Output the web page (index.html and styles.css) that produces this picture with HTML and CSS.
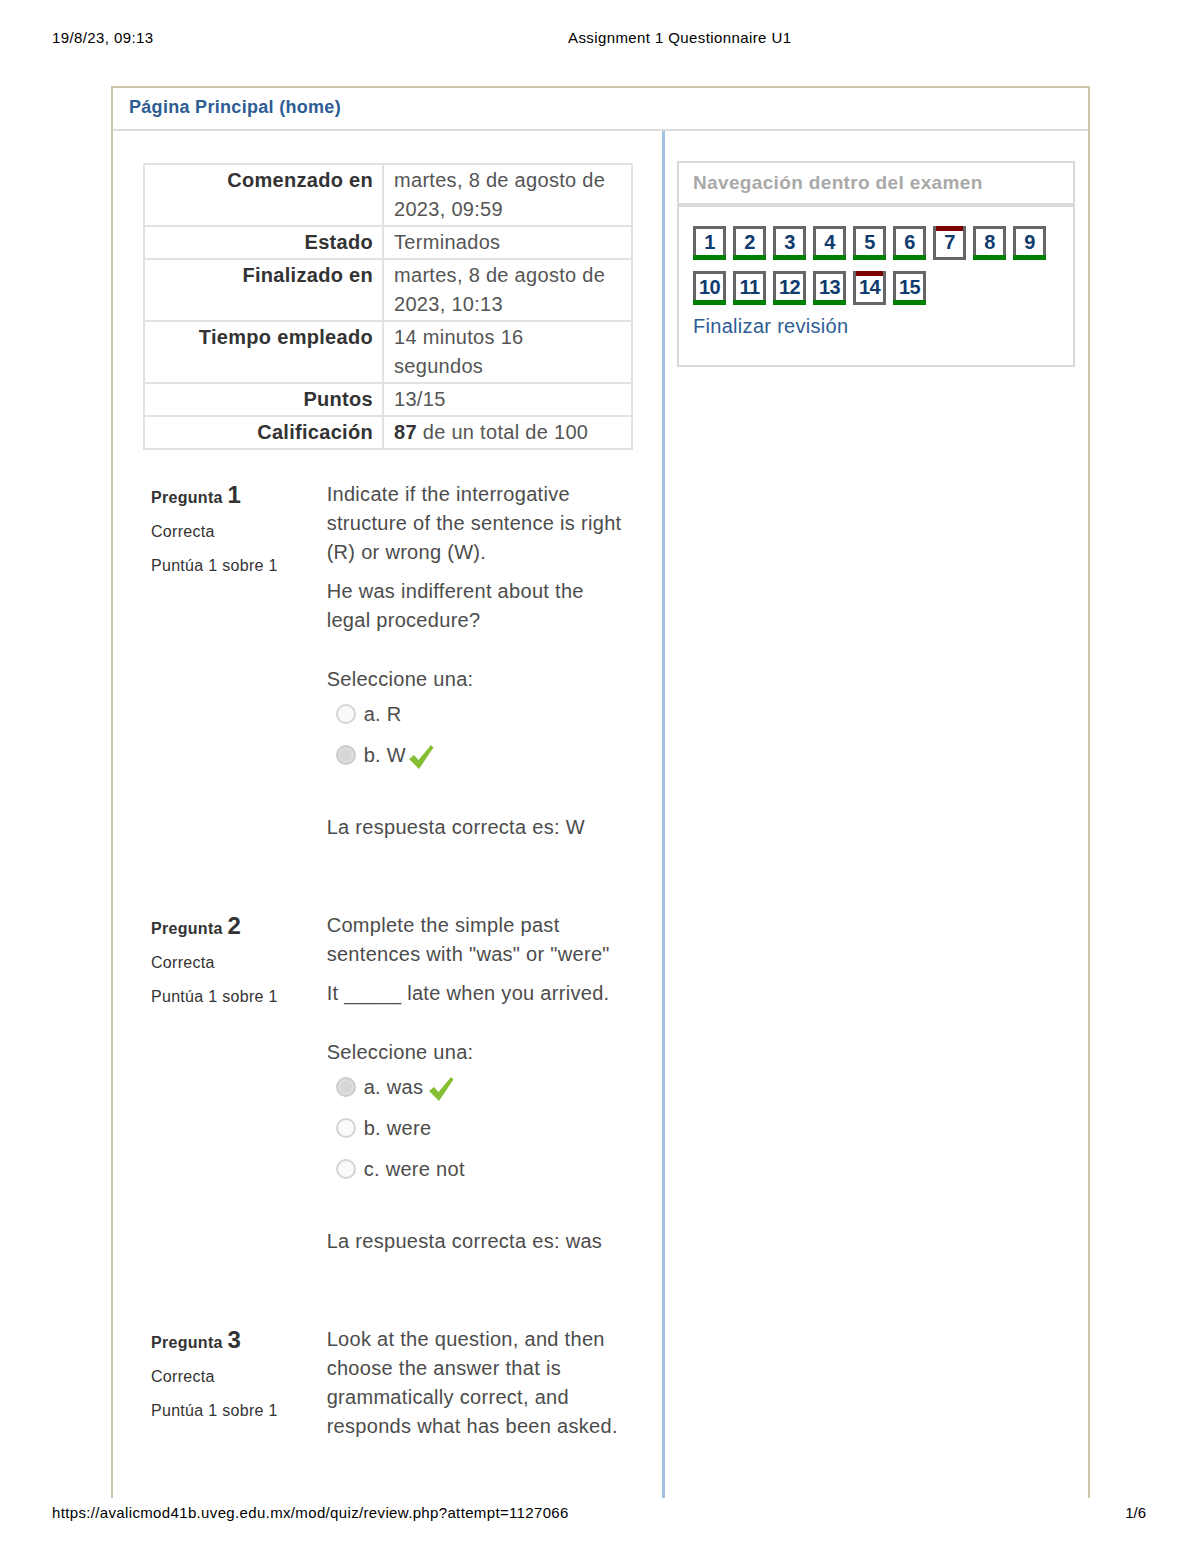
FILE: index.html
```html
<!DOCTYPE html>
<html lang="es">
<head>
<meta charset="utf-8">
<title>Assignment 1 Questionnaire U1</title>
<link rel="stylesheet" href="styles.css">
</head>
<body>
<header class="print-head">
  <span class="ph-date">19/8/23, 09:13</span>
  <span class="ph-title">Assignment 1 Questionnaire U1</span>
</header>

<div class="frame">
  <div class="frame-head"><a class="home-link">Página Principal (home)</a></div>
  <div class="frame-body">
    <main class="main-col">
      <table class="summary">
        <tr><th>Comenzado en</th><td>martes, 8 de agosto de 2023, 09:59</td></tr>
        <tr><th>Estado</th><td>Terminados</td></tr>
        <tr><th>Finalizado en</th><td>martes, 8 de agosto de 2023, 10:13</td></tr>
        <tr><th>Tiempo empleado</th><td>14 minutos 16 segundos</td></tr>
        <tr><th>Puntos</th><td>13/15</td></tr>
        <tr><th>Calificación</th><td><b>87</b> de un total de 100</td></tr>
      </table>

      <section class="que">
        <div class="info">
          <h3 class="qno"><span class="qword">Pregunta</span> <span class="qnum">1</span></h3>
          <div class="state">Correcta</div>
          <div class="grade">Puntúa 1 sobre 1</div>
        </div>
        <div class="content">
          <div class="qtext">
            <p>Indicate if the interrogative structure of the sentence is right (R) or wrong (W).</p>
            <p>He was indifferent about the legal procedure?</p>
          </div>
          <div class="ablock">
            <div class="prompt">Seleccione una:</div>
            <div class="opt"><span class="radio"></span><span>a. R</span></div>
            <div class="opt"><span class="radio checked"></span><span>b. W</span><svg class="tick" viewBox="0 0 26 26" width="26" height="26"><path d="M1 15 L6 11 L10.5 16 L23 1 L25.5 3.5 L11 25 Z" fill="#86bf33"/></svg></div>
          </div>
          <div class="rightanswer">La respuesta correcta es: W</div>
        </div>
      </section>

      <section class="que">
        <div class="info">
          <h3 class="qno"><span class="qword">Pregunta</span> <span class="qnum">2</span></h3>
          <div class="state">Correcta</div>
          <div class="grade">Puntúa 1 sobre 1</div>
        </div>
        <div class="content">
          <div class="qtext">
            <p>Complete the simple past sentences with "was" or "were"</p>
            <p>It _____ late when you arrived.</p>
          </div>
          <div class="ablock">
            <div class="prompt">Seleccione una:</div>
            <div class="opt"><span class="radio checked"></span><span>a. was</span><svg class="tick gap" viewBox="0 0 26 26" width="26" height="26"><path d="M1 15 L6 11 L10.5 16 L23 1 L25.5 3.5 L11 25 Z" fill="#86bf33"/></svg></div>
            <div class="opt"><span class="radio"></span><span>b. were</span></div>
            <div class="opt"><span class="radio"></span><span>c. were not</span></div>
          </div>
          <div class="rightanswer">La respuesta correcta es: was</div>
        </div>
      </section>

      <section class="que">
        <div class="info">
          <h3 class="qno"><span class="qword">Pregunta</span> <span class="qnum">3</span></h3>
          <div class="state">Correcta</div>
          <div class="grade">Puntúa 1 sobre 1</div>
        </div>
        <div class="content">
          <div class="qtext">
            <p>Look at the question, and then choose the answer that is grammatically correct, and responds what has been asked.</p>
          </div>
        </div>
      </section>
    </main>

    <aside class="side-col">
      <div class="navblock">
        <div class="nav-head">Navegación dentro del examen</div>
        <div class="nav-body">
          <div class="nav-buttons">
            <span class="qbtn ok">1</span>
            <span class="qbtn ok">2</span>
            <span class="qbtn ok">3</span>
            <span class="qbtn ok">4</span>
            <span class="qbtn ok">5</span>
            <span class="qbtn ok">6</span>
            <span class="qbtn bad">7</span>
            <span class="qbtn ok">8</span>
            <span class="qbtn ok">9</span>
            <span class="qbtn ok">10</span>
            <span class="qbtn ok">11</span>
            <span class="qbtn ok">12</span>
            <span class="qbtn ok">13</span>
            <span class="qbtn bad">14</span>
            <span class="qbtn ok">15</span>
          </div>
          <a class="finish">Finalizar revisión</a>
        </div>
      </div>
    </aside>
  </div>
</div>

<footer class="print-foot">
  <span class="url">https://avalicmod41b.uveg.edu.mx/mod/quiz/review.php?attempt=1127066</span>
  <span class="pg">1/6</span>
</footer>
</body>
</html>
```

FILE: styles.css
```css
html, body {
  margin: 0;
  padding: 0;
  background: #fff;
}
body {
  font-family: "Liberation Sans", Arial, sans-serif;
  color: #000;
  width: 1200px;
  height: 1553px;
  overflow: hidden;
}

/* print header */
.print-head {
  display: flex;
  padding: 30px 0 0 52px;
  height: 16px;
  font-size: 15px;
  line-height: 16px;
  letter-spacing: 0.4px;
}
.ph-date { width: 516px; }

/* frame */
.frame {
  margin: 40px 0 0 111px;
  width: 975px;
  height: 1410px;
  border: 2px solid #cbc6a7;
  border-bottom: none;
  overflow: hidden;
}
.frame-head {
  height: 41px;
  padding-left: 16px;
  border-bottom: 2px solid #dcdcdc;
  display: flex;
  align-items: center;
}
.home-link {
  color: #2d5d94;
  font-weight: bold;
  font-size: 18px;
  letter-spacing: 0.3px;
  margin-top: -2px;
}
.frame-body {
  display: flex;
  height: 1400px;
}

/* main column */
.main-col {
  padding: 32px 30px 0 30px;
  border-right: 3px solid #9fc3e0;
  box-sizing: content-box;
  width: 489px;
}
.summary {
  border-collapse: collapse;
  width: 490px;
  font-size: 20px;
  line-height: 29px;
  letter-spacing: 0.3px;
}
.summary th, .summary td {
  border: 2px solid #e2e2e2;
  padding: 1px 10px;
  vertical-align: top;
}
.summary th {
  width: 218px;
  text-align: right;
  color: #333;
  padding-right: 9px;
}
.summary td {
  color: #555;
  text-align: left;
  padding-right: 24px;
}
.summary td b { color: #333; }

/* questions */
.que {
  display: flex;
  margin-top: 30px;
  margin-bottom: 69px;
}
.info {
  width: 176px;
  padding-left: 8px;
  color: #333;
  font-size: 16px;
  letter-spacing: 0.3px;
}
.qno {
  margin: 0;
  line-height: 29px;
  font-weight: bold;
  font-size: 16px;
  color: #333;
}
.qnum { font-size: 24px; }
.state {
  margin-top: 3px;
  line-height: 34px;
}
.grade {
  line-height: 34px;
}
.content {
  width: 306px;
  font-size: 20px;
  line-height: 29px;
  color: #4c4c4c;
  letter-spacing: 0.3px;
}
.qtext p {
  margin: 0 0 10px 0;
}
.ablock {
  margin-top: 30px;
}
.opt {
  display: flex;
  align-items: center;
  height: 41px;
  padding-left: 9px;
}
.radio {
  width: 20px;
  height: 20px;
  box-sizing: border-box;
  border-radius: 50%;
  border: 2px solid #d4d4d4;
  background: #fafafa;
  margin-right: 8px;
  margin-top: -2px;
}
.radio.checked {
  background: #d6d6d6;
  border-color: #cccccc;
  box-shadow: inset 0 0 0 2px #dedede;
}
.tick {
  margin-left: 2px;
  margin-top: 2px;
}
.tick.gap { margin-left: 5px; }
.rightanswer {
  margin-top: 37px;
}

/* side column */
.side-col {
  width: 398px;
  padding: 30px 13px 0 12px;
}
.navblock {
  width: 398px;
}
.nav-head {
  border: 2px solid #dadada;
  height: 40px;
  padding-left: 14px;
  display: flex;
  align-items: center;
  font-weight: bold;
  font-size: 19px;
  color: #a9a9a9;
  letter-spacing: 0.35px;
}
.nav-body {
  border: 2px solid #dadada;
  padding: 19px 14px 24px 14px;
}
.nav-buttons {
  display: flex;
  flex-wrap: wrap;
  gap: 11px 7px;
  width: 360px;
}
.qbtn {
  position: relative;
  width: 33px;
  height: 34px;
  box-sizing: border-box;
  border: 3px solid #666;
  background: #fff;
  color: #0f3b6e;
  font-weight: bold;
  font-size: 20px;
  line-height: 27px;
  text-align: center;
  letter-spacing: -0.5px;
}
.qbtn.ok::after {
  content: "";
  position: absolute;
  left: -3px;
  right: -3px;
  bottom: -3px;
  height: 5px;
  background: #008000;
}
.qbtn.bad::before {
  content: "";
  position: absolute;
  left: 0;
  right: 0;
  top: -3px;
  height: 5px;
  background: #7d0000;
}
.finish {
  display: block;
  margin-top: 7px;
  color: #2d5d94;
  font-size: 20px;
  line-height: 29px;
  letter-spacing: 0.3px;
}

/* print footer */
.print-foot {
  display: flex;
  justify-content: space-between;
  padding: 7px 54px 0 52px;
  font-size: 15px;
  line-height: 16px;
}
.url { letter-spacing: 0.35px; }
.pg { letter-spacing: 0; }
```
